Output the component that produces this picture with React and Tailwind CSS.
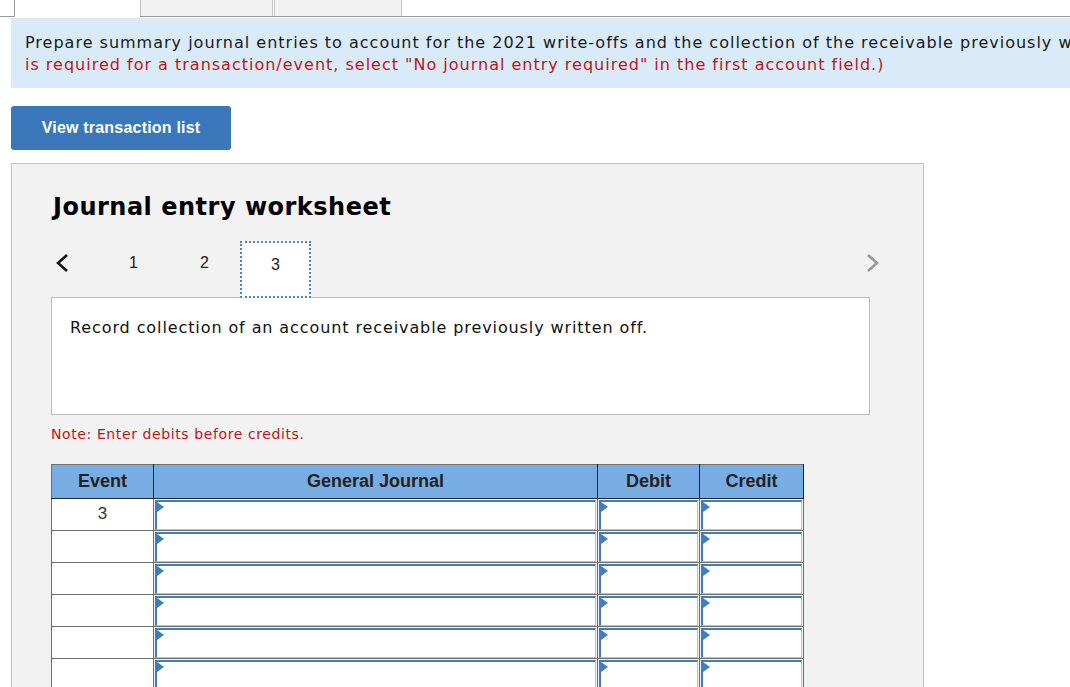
import React from 'react';

const verdana = { fontFamily: '"DejaVu Sans", Verdana, sans-serif' };
const arial = { fontFamily: '"Liberation Sans", Arial, sans-serif' };

const InputCell = () => (
  <td className="border-b border-r border-[#6f6f6f] p-0 pl-px pr-px pt-px align-top">
    <div className="relative h-[30px] border border-[#a9c5e8] border-t-2 border-l-2 border-t-[#3f7cc2] border-l-[#3f7cc2] bg-white">
      <span className="absolute left-0 top-0 h-0 w-0 border-y-[5px] border-l-[7px] border-y-transparent border-l-[#3f7cc2]" />
    </div>
  </td>
);

const TopTabs = () => (
  <div className="flex h-[17px]">
    <div className="w-[14px] border-b border-[#999]" />
    <div className="w-[126px] border-l border-[#999] bg-white" />
    <div className="flex flex-1 border-b border-[#999]">
      <div className="w-[133px] border-x border-[#c4c4c4] bg-[#f2f2f2]" />
      <div className="ml-[1px] w-[128px] border-x border-[#c4c4c4] bg-[#f2f2f2]" />
    </div>
  </div>
);

const JournalTable = ({ rows }) => (
  <table className="w-[752px] table-fixed border-collapse border-l border-[#6f6f6f]" style={arial}>
    <thead>
      <tr className="h-[34px] bg-[#78ade3] text-[18px] font-bold text-[#222]">
        <th className="w-[102px] border-t border-r border-b border-t-[#6f6f6f] border-r-[#222] border-b-[#222] font-bold">Event</th>
        <th className="w-[444px] border-t border-r border-b border-t-[#6f6f6f] border-r-[#222] border-b-[#222] font-bold">General Journal</th>
        <th className="w-[102px] border-t border-r border-b border-t-[#6f6f6f] border-r-[#222] border-b-[#222] font-bold">Debit</th>
        <th className="w-[104px] border-t border-r border-b border-t-[#6f6f6f] border-r-[#222] border-b-[#222] font-bold">Credit</th>
      </tr>
    </thead>
    <tbody>
      {rows.map((ev, i) => (
        <tr key={i} className="h-[32px]">
          <td className="border-b border-r border-[#6f6f6f] bg-white pt-[1px] text-center align-top text-[17px] leading-[28px] text-[#333]">{ev}</td>
          <InputCell />
          <InputCell />
          <InputCell />
        </tr>
      ))}
    </tbody>
  </table>
);

export default function App() {
  const tabs = ['1', '2', '3'];
  return (
    <div className="min-h-[687px] w-[1070px] overflow-hidden bg-white">
      <TopTabs />

      <div className="ml-[11px] mt-px w-[1200px] bg-[#d9ebf9] pb-[12px] pl-[14px] pt-[14px] text-[16px] leading-[22px] tracking-[1px]" style={verdana}>
        <div className="whitespace-nowrap text-[#1a1a1a]">
          Prepare summary journal entries to account for the 2021 write-offs and the collection of the receivable previously written off.
        </div>
        <div className="whitespace-nowrap text-[#c0141c]">
          is required for a transaction/event, select "No journal entry required" in the first account field.)
        </div>
      </div>

      <button
        className="ml-[11px] mt-[18px] flex h-[44px] w-[220px] items-center justify-center rounded-[3px] bg-[#3a77bb] text-[16px] font-bold tracking-[0.2px] text-white"
        style={arial}
      >
        View transaction list
      </button>

      <div className="ml-[11px] mt-[13px] w-[913px] border border-[#c4c4c4] bg-[#f2f2f2] pb-[20px] pl-[39px] pt-[28px]">
        <h1 className="pl-[2px] text-[24px] font-bold leading-[30px] tracking-[0.5px] text-black" style={verdana}>
          Journal entry worksheet
        </h1>

        <div className="mt-[19px] flex h-[56px] w-[835px] items-start justify-between">
          <div className="flex items-start">
            <div className="flex h-[44px] w-[47px] items-center pl-[3px]">
              <svg width="16" height="20" viewBox="0 0 16 20">
                <polyline points="13,2 4,10 13,18" fill="none" stroke="#111" strokeWidth="2.6" />
              </svg>
            </div>
            {tabs.map((t) => (
              <div
                key={t}
                className={`relative z-10 flex h-[57px] w-[71px] justify-center pt-[12px] text-[16px] leading-[20px] text-[#222] ${
                  t === '3' ? 'border-2 border-dotted border-[#4a84c6] bg-white pt-[9px]' : ''
                }`}
                style={arial}
              >
                {t}
              </div>
            ))}
          </div>
          <div className="flex h-[44px] items-center pr-[5px]">
            <svg width="16" height="20" viewBox="0 0 16 20">
              <polyline points="3,2 12,10 3,18" fill="none" stroke="#999" strokeWidth="2.6" />
            </svg>
          </div>
        </div>

        <div className="h-[118px] w-[819px] border border-[#bdbdbd] bg-white pl-[18px] pt-[19px] text-[16px] leading-[22px] tracking-[0.9px] text-[#111]" style={verdana}>
          Record collection of an account receivable previously written off.
        </div>

        <p className="mt-[10px] text-[14px] leading-[18px] tracking-[0.6px] text-[#c0141c]" style={verdana}>
          Note: Enter debits before credits.
        </p>

        <div className="mt-[21px]">
          <JournalTable rows={['3', '', '', '', '', '', '']} />
        </div>
      </div>
    </div>
  );
}
